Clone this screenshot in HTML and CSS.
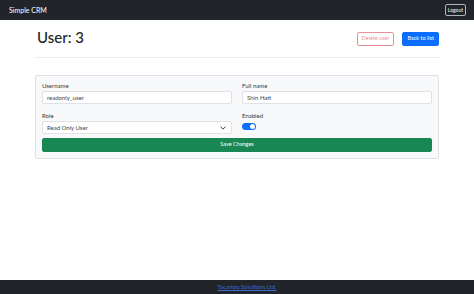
FILE: index.html
```html
<!DOCTYPE html>
<html lang="en">
<head>
    <meta charset="UTF-8">
    <meta name="viewport" content="width=device-width, initial-scale=1.0">
    <title>Simple CRM - User</title>
    <link rel="stylesheet" href="styles.css">
</head>
<body>
    <nav class="navbar">
        <span class="brand">Simple CRM</span>
        <button class="btn-logout">Logout</button>
    </nav>

    <main class="container">
        <div class="page-header">
            <h1>User: 3</h1>
            <div class="actions">
                <button class="btn btn-delete">Delete user</button>
                <button class="btn btn-back">Back to list</button>
            </div>
        </div>

        <div class="card">
            <div class="form-grid">
                <div class="field">
                    <label for="username">Username</label>
                    <div class="input">readonly_user</div>
                </div>
                <div class="field">
                    <label for="fullName">Full name</label>
                    <div class="input">Shin Hati</div>
                </div>
                <div class="field">
                    <label>Role</label>
                    <div class="input select">
                        <span>Read Only User</span>
                        <svg width="6" height="4" viewBox="0 0 16 10"><path d="M2 2l6 6 6-6" fill="none" stroke="#343a40" stroke-width="2.5" stroke-linecap="round" stroke-linejoin="round"/></svg>
                    </div>
                </div>
                <div class="field">
                    <label>Enabled</label>
                    <div class="switch"><span class="knob"></span></div>
                </div>
            </div>
            <button class="btn btn-save">Save Changes</button>
        </div>
    </main>

    <footer class="footer">
        <a href="#">Tacanoo Solutions Ltd.</a>
    </footer>
</body>
</html>
```

FILE: styles.css
```css
body {
    font-family: Lato, "Noto Sans", sans-serif;
    color: #212529;
    margin: 0;
    height: 100vh;
    display: flex;
    flex-direction: column;
    background: #fff;
}

button {
    font-family: inherit;
    cursor: pointer;
    line-height: 1;
}

.navbar {
    height: 20px;
    flex-shrink: 0;
    background-color: #212529;
    display: flex;
    justify-content: space-between;
    align-items: center;
    padding: 0 8px 0 9px;
}

.brand {
    color: #fff;
    font-size: 7px;
    line-height: 8px;
}

.btn-logout {
    background: transparent;
    color: #f8f9fa;
    border: 1px solid #adb5bd;
    border-radius: 2px;
    font-size: 5px;
    height: 12px;
    padding: 0 2px;
}

.container {
    width: 404px;
    margin: 0 auto;
}

.page-header {
    display: flex;
    justify-content: space-between;
    align-items: flex-end;
    height: 18px;
    padding-top: 8px;
    padding-bottom: 11px;
    border-bottom: 1px solid #e9ecef;
    margin-bottom: 17px;
}

h1 {
    font-size: 15px;
    font-weight: 500;
    line-height: 18px;
    margin: 0 0 0 2px;
}

.actions {
    display: flex;
    gap: 8px;
    margin-right: 0;
}

.btn {
    font-size: 5.5px;
    height: 14px;
    padding: 0 4px;
    border-radius: 2px;
    border: 1px solid transparent;
}

.btn-delete {
    background: #fff;
    color: #dc3545;
    border-color: #dc3545;
    opacity: 0.55;
}

.btn-back {
    background-color: #0d6efd;
    color: #fff;
    border-color: #0d6efd;
}

.card {
    background-color: #f8f9fa;
    border: 1px solid #dee2e6;
    border-radius: 2px;
    padding: 6px;
}

.form-grid {
    display: grid;
    grid-template-columns: 1fr 1fr;
    column-gap: 10px;
    row-gap: 8px;
}

.field {
    display: flex;
    flex-direction: column;
    gap: 1px;
}

.field label {
    display: block;
    height: 8px;
    font-size: 6px;
    line-height: 8px;
    color: #343a40;
}

.input {
    height: 13px;
    box-sizing: border-box;
    border: 1px solid #dee2e6;
    border-radius: 2px;
    background: #fff;
    font-size: 6px;
    line-height: 11px;
    color: #3d434a;
    padding: 0 4px;
}

.select {
    display: flex;
    align-items: center;
    justify-content: space-between;
    padding-right: 5px;
}

.switch {
    width: 14px;
    height: 7px;
    margin-top: 2px;
    border-radius: 4px;
    background-color: #0d6efd;
    display: flex;
    align-items: center;
    justify-content: flex-end;
    padding: 0 1px;
    box-sizing: border-box;
}

.knob {
    width: 5px;
    height: 5px;
    border-radius: 50%;
    background: #fff;
}

.btn-save {
    display: block;
    width: 100%;
    margin-top: 4px;
    background-color: #198754;
    border-color: #198754;
    color: #fff;
}

.footer {
    margin-top: auto;
    height: 14px;
    flex-shrink: 0;
    background-color: #212529;
    display: flex;
    justify-content: center;
    align-items: center;
    padding-left: 20px;
}

.footer a {
    color: #3b6ad6;
    font-size: 6px;
    line-height: 8px;
}
```
